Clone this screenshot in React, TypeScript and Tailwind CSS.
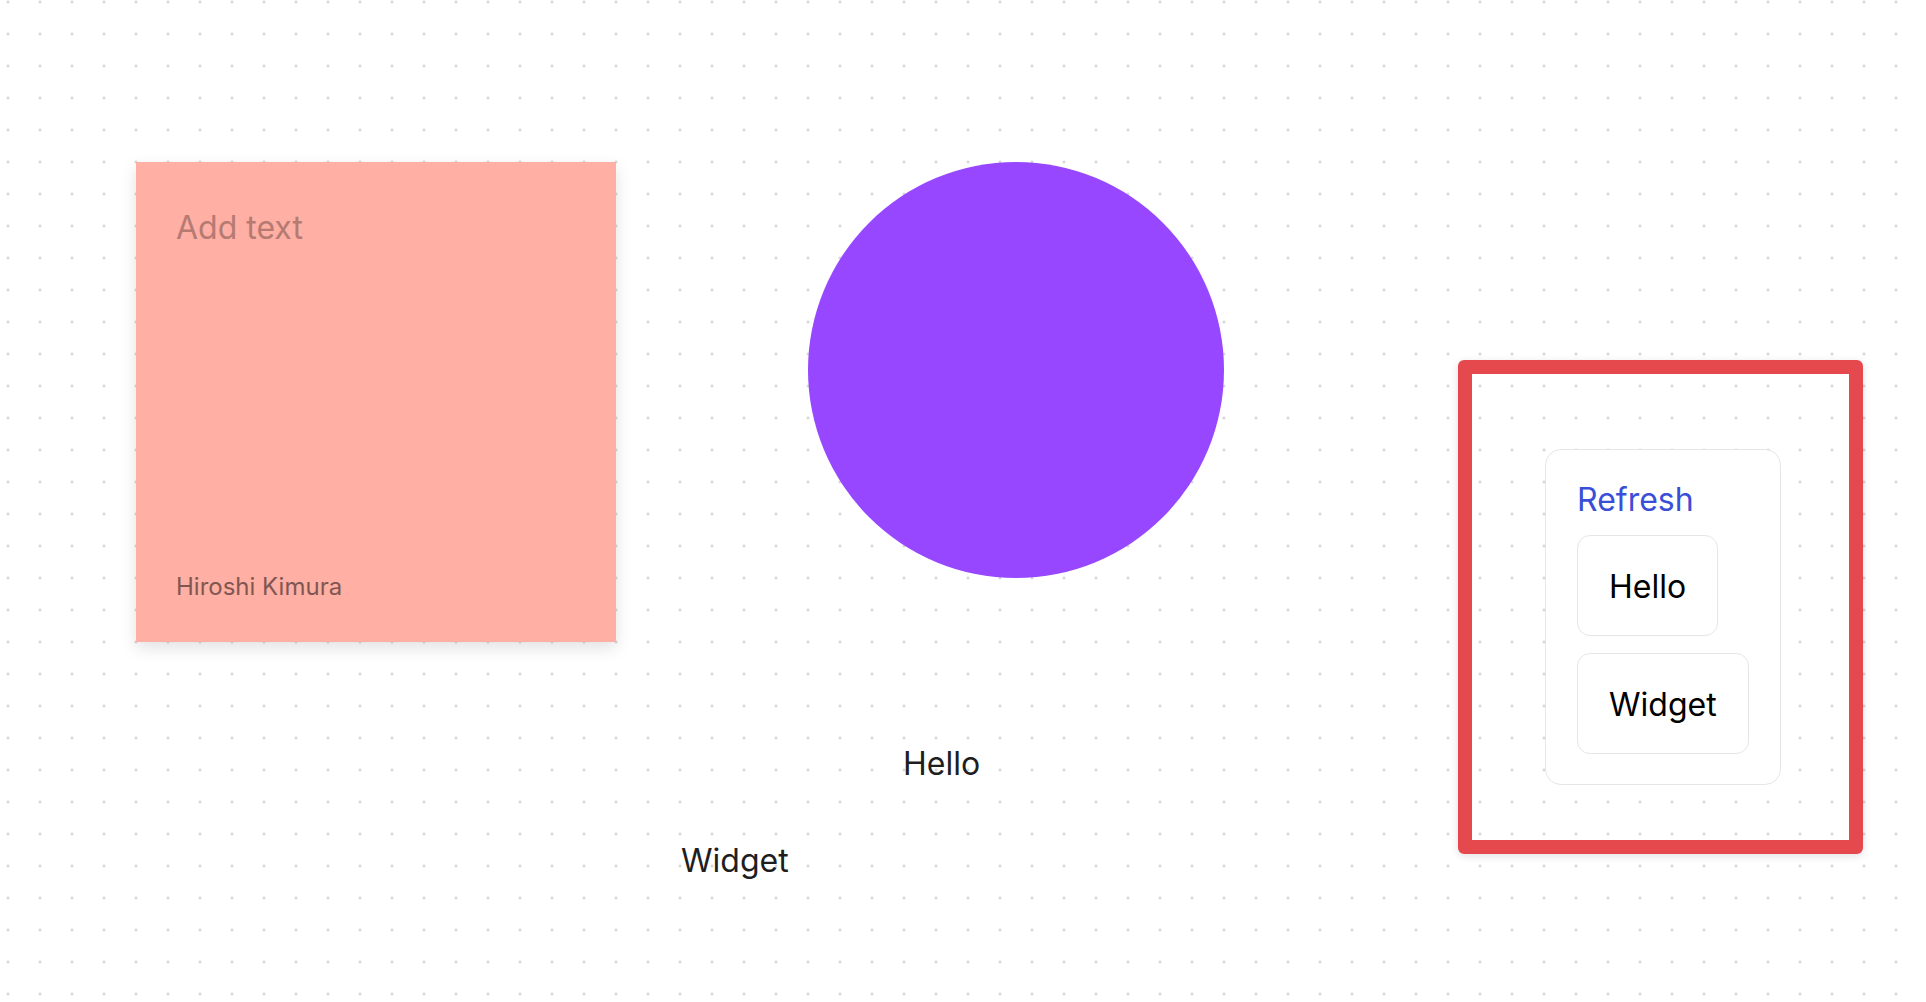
export default function App() {
  return (
    <div className="relative h-[1002px] w-full overflow-hidden bg-white font-['Inter',sans-serif] bg-[radial-gradient(circle,#d6d6d6_1.35px,transparent_1.7px)] bg-[length:32px_32px] bg-[position:-8px_-14px]">
      {/* sticky note */}
      <div className="absolute left-[136px] top-[162px] flex h-[480px] w-[480px] flex-col justify-between bg-[#ffafa3] px-10 pt-[42px] pb-[37px] shadow-[0_6px_16px_rgba(0,0,0,0.12)]">
        <div className="text-[32px] leading-[48px] text-[#b57b73]">Add text</div>
        <div className="text-[24px] leading-[36px] text-[#7f5752]">Hiroshi Kimura</div>
      </div>

      {/* ellipse */}
      <div className="absolute left-[808px] top-[162px] h-[416px] w-[416px] rounded-full bg-[#9747ff]" />

      {/* loose text */}
      <div className="absolute left-[903px] top-[745px] text-[32px] leading-[38px] text-[#1e1e1e]">Hello</div>
      <div className="absolute left-[681px] top-[842px] text-[32px] leading-[38px] text-[#1e1e1e]">Widget</div>

      {/* section frame */}
      <div className="absolute left-[1458px] top-[360px] h-[494px] w-[405px] rounded-[6px] border-[14px] border-[#e5484d] pl-[73px] pt-[75px] shadow-[0_2px_8px_rgba(0,0,0,0.12)]">
        <div className="flex w-[236px] flex-col items-start gap-[17px] rounded-2xl border border-[#e6e6e6] bg-white px-[31px] pt-[32px] pb-[30px]">
          <div className="h-9 text-[32px] leading-9 text-[#3a4ed8]">Refresh</div>
          <div className="flex h-[101px] items-center rounded-[13px] border border-[#e6e6e6] bg-white px-[31px] pt-[2px] text-[32px] leading-9 text-black">
            Hello
          </div>
          <div className="flex h-[101px] items-center rounded-[13px] border border-[#e6e6e6] bg-white px-[31px] pt-[2px] text-[32px] leading-9 text-black">
            Widget
          </div>
        </div>
      </div>
    </div>
  );
}
